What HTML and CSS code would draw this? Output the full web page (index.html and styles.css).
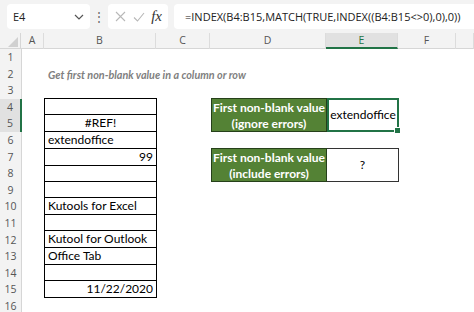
FILE: index.html
```html
<!DOCTYPE html>
<html lang="en">
<head>
  <meta charset="UTF-8" />
  <title>Get first non-blank value</title>
  <link rel="stylesheet" href="styles.css">
</head>
<body>
  <!-- Formula bar -->
  <div class="toolbar">
    <div class="namebox">
      <span>E4</span>
      <svg width="10" height="6" viewBox="0 0 10 6"><path d="M1 1l4 4 4-4" fill="none" stroke="#555" stroke-width="1.2"/></svg>
    </div>
    <div class="dots">⋮</div>
    <div class="fnbox">
      <svg width="11" height="11" viewBox="0 0 11 11"><path d="M1 1l9 9M10 1l-9 9" stroke="#b8b8b8" stroke-width="1.1"/></svg>
      <svg width="12" height="10" viewBox="0 0 12 10"><path d="M1 5.5l3.5 3.5 6.5-8" fill="none" stroke="#b8b8b8" stroke-width="1.1"/></svg>
      <span class="fx">fx</span>
    </div>
    <div class="formula">=INDEX(B4:B15,MATCH(TRUE,INDEX((B4:B15&lt;&gt;0),0),0))</div>
  </div>

  <!-- Column headers -->
  <div class="colheads">
    <div class="corner"><svg width="10" height="10" viewBox="0 0 10 10"><path d="M10 0v10H0z" fill="#d0d0d0"/></svg></div>
    <div class="colhead">A</div>
    <div class="colhead">B</div>
    <div class="colhead">C</div>
    <div class="colhead">D</div>
    <div class="colhead active">E</div>
    <div class="colhead">F</div>
    <div class="colhead"></div>
  </div>

  <div class="sheet">
    <div class="rowheads">
      <div class="rowhead">1</div>
      <div class="rowhead">2</div>
      <div class="rowhead">3</div>
      <div class="rowhead active">4</div>
      <div class="rowhead active">5</div>
      <div class="rowhead">6</div>
      <div class="rowhead">7</div>
      <div class="rowhead">8</div>
      <div class="rowhead">9</div>
      <div class="rowhead">10</div>
      <div class="rowhead">11</div>
      <div class="rowhead">12</div>
      <div class="rowhead">13</div>
      <div class="rowhead">14</div>
      <div class="rowhead">15</div>
      <div class="rowhead">16</div>
    </div>

    <div class="cells">
      <div class="title">Get first non-blank value in a column or row</div>

      <div class="list">
        <div class="cell"></div>
        <div class="cell center">#REF!</div>
        <div class="cell">extendoffice</div>
        <div class="cell right">99</div>
        <div class="cell"></div>
        <div class="cell"></div>
        <div class="cell">Kutools for Excel</div>
        <div class="cell"></div>
        <div class="cell">Kutool for Outlook</div>
        <div class="cell">Office Tab</div>
        <div class="cell"></div>
        <div class="cell right">11/22/2020</div>
      </div>

      <div class="result first">
        <div class="label">First non-blank value<br>(ignore errors)</div>
        <div class="value selected">extendoffice<span class="handle"></span></div>
      </div>

      <div class="result second">
        <div class="label">First non-blank value<br>(include errors)</div>
        <div class="value">?</div>
      </div>
    </div>
  </div>
</body>
</html>
```

FILE: styles.css
```css
body {
  margin: 0;
  width: 474px;
  height: 312px;
  overflow: hidden;
  background: #fff;
  font-family: Lato, "Liberation Sans", sans-serif;
  color: #000;
}

/* formula bar */
.toolbar {
  display: flex;
  align-items: center;
  height: 33px;
  padding-left: 7px;
  background: #f3f3f3;
  font-family: "Open Sans", sans-serif;
  font-size: 11px;
  color: #222;
}
.namebox, .fnbox, .formula {
  height: 25px;
  background: #fff;
  border-radius: 4px;
  box-sizing: border-box;
  display: flex;
  align-items: center;
}
.namebox {
  width: 83px;
  justify-content: space-between;
  padding: 0 6px 0 6px;
}
.dots {
  width: 18px;
  text-align: center;
  color: #666;
  font-size: 12px;
}
.fnbox {
  width: 60px;
  justify-content: space-between;
  padding: 0 6px 0 7px;
}
.fx {
  font-family: "Liberation Serif", serif;
  font-style: italic;
  font-size: 15px;
  color: #333;
}
.formula {
  flex: 1;
  margin-left: 6px;
  padding-left: 11px;
  border-radius: 4px 0 0 4px;
  white-space: nowrap;
}

/* headers */
.colheads, .cells {
  display: grid;
  grid-template-columns: 21px 23px 112px 54px 116px 72px 58px 1fr;
}
.colheads {
  height: 15px;
  background: #f3f3f3;
  border-bottom: 1px solid #d6d6d6;
  font-family: "Open Sans", sans-serif;
  font-size: 10.5px;
  color: #555;
}
.cells {
  grid-template-columns: 23px 112px 54px 116px 72px 58px 1fr;
  grid-template-rows: repeat(16, 16.6px);
  flex: 1;
}
.corner {
  display: flex;
  align-items: flex-end;
  justify-content: flex-end;
  padding: 0 2px 2px 0;
  border-right: 1px solid #d6d6d6;
}
.colhead {
  text-align: center;
  line-height: 15px;
  border-right: 1px solid #dcdcdc;
}
.colhead.active {
  background: #e1e1e1;
  color: #217346;
  border-bottom: 2px solid #217346;
  line-height: 14px;
}

.sheet {
  display: flex;
}
.rowheads {
  width: 21px;
  background: #f3f3f3;
  border-right: 1px solid #d6d6d6;
  font-family: "Open Sans", sans-serif;
  font-size: 10.5px;
  color: #555;
}
.rowhead {
  height: 16.6px;
  line-height: 16.6px;
  text-align: center;
  box-sizing: border-box;
}
.rowhead.active {
  background: #e1e1e1;
  border-right: 2px solid #217346;
  margin-right: -1px;
}

/* sheet content */
.title {
  grid-column: 2 / span 5;
  grid-row: 2;
  padding-left: 3px;
  font-size: 10.8px;
  font-weight: bold;
  font-style: italic;
  color: #808080;
  line-height: 17px;
  white-space: nowrap;
}
.list {
  grid-column: 2;
  grid-row: 4 / span 12;
  display: flex;
  flex-direction: column;
  border: 1px solid #000;
  margin-left: -1px;
  margin-top: -1px;
}
.cell {
  flex: 1;
  border-bottom: 1px solid #000;
  padding: 0 3px;
  font-size: 12px;
  line-height: 16px;
  white-space: nowrap;
}
.cell:last-child {
  border-bottom: none;
}
.center { text-align: center; }
.right { text-align: right; }

.result {
  grid-column: 4 / span 2;
  display: flex;
  margin-top: -1px;
  font-size: 12px;
}
.first { grid-row: 4 / span 2; }
.second { grid-row: 7 / span 2; }
.label {
  width: 116px;
  box-sizing: border-box;
  background: #548235;
  border: 1px solid #26401a;
  color: #fff;
  font-weight: bold;
  text-align: center;
  line-height: 16px;
  padding-top: 1px;
}
.value {
  flex: 1;
  position: relative;
  display: flex;
  align-items: center;
  justify-content: center;
  border: 1px solid #333;
  border-left: none;
}
.value.selected {
  border: 2px solid #217346;
}
.handle {
  position: absolute;
  right: -4px;
  bottom: -4px;
  width: 5px;
  height: 5px;
  background: #217346;
  border: 1px solid #fff;
}
```
